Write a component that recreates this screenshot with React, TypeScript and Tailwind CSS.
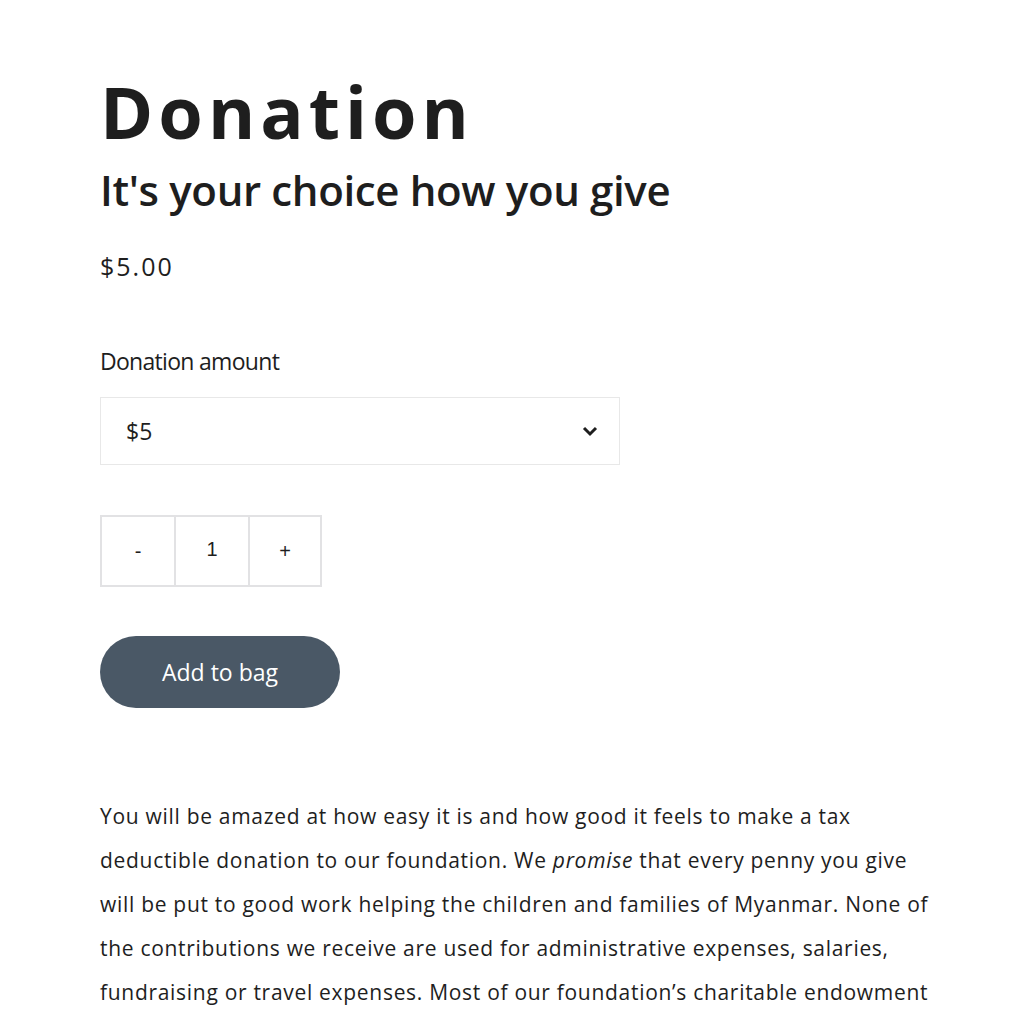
import React, { useState } from "react";

const lines: React.ReactNode[] = [
  "You will be amazed at how easy it is and how good it feels to make a tax",
  <>
    deductible donation to our foundation. We <em>promise</em> that every penny you give
  </>,
  "will be put to good work helping the children and families of Myanmar. None of",
  "the contributions we receive are used for administrative expenses, salaries,",
  "fundraising or travel expenses. Most of our foundation\u2019s charitable endowment",
];

export default function App() {
  const [qty, setQty] = useState(1);
  const [amount, setAmount] = useState("$5");

  return (
    <div className="min-h-screen bg-white text-[#1e1e1e] font-['Open_Sans',sans-serif]">
      <div className="pl-[100px] pt-[71px]">
        {/* Title */}
        <h1 className="font-bold text-[72px] leading-[80px] tracking-[5px]">Donation</h1>
        <h2 className="font-semibold text-[42px] leading-[48px] mt-[15px] tracking-[-0.35px]">
          It's your choice how you give
        </h2>

        <div className="text-[25px] leading-[32px] mt-[36px] tracking-[2px]">$5.00</div>

        {/* Amount select */}
        <label className="block text-[23px] leading-[32px] mt-[63px] tracking-[-0.7px]">
          Donation amount
        </label>
        <div className="relative mt-[20px] w-[520px]">
          <select
            value={amount}
            onChange={(e) => setAmount(e.target.value)}
            className="appearance-none w-full h-[68px] border border-[#e8e8e8] bg-white pl-[25px] text-[23px] outline-none"
          >
            <option>$5</option>
            <option>$10</option>
            <option>$25</option>
            <option>$50</option>
          </select>
          <svg
            width="16"
            height="12"
            viewBox="0 0 16 12"
            className="absolute right-[22px] top-[28px] pointer-events-none"
          >
            <polyline
              points="2,3 8,9 14,3"
              fill="none"
              stroke="#1e1e1e"
              strokeWidth="3"
            />
          </svg>
        </div>

        {/* Quantity */}
        <div className="mt-[50px] flex w-fit font-['Liberation_Sans',sans-serif] text-[20px]">
          <button
            onClick={() => setQty((q) => Math.max(1, q - 1))}
            className="w-[76px] h-[72px] border-2 border-[#e2e2e4] flex items-center justify-center"
          >
            -
          </button>
          <div className="w-[72px] h-[72px] border-y-2 border-[#e2e2e4] flex items-center justify-center pb-[4px]">
            {qty}
          </div>
          <button
            onClick={() => setQty((q) => q + 1)}
            className="w-[74px] h-[72px] border-2 border-[#e2e2e4] flex items-center justify-center"
          >
            +
          </button>
        </div>

        {/* Add to bag */}
        <button className="mt-[49px] w-[240px] h-[72px] rounded-full bg-[#4a5866] text-white text-[23px]">
          Add to bag
        </button>

        {/* Description */}
        <p className="mt-[86px] text-[21px] leading-[44px] tracking-[0.7px] whitespace-nowrap">
          {lines.map((l, i) => (
            <span key={i} className="block">
              {l}
            </span>
          ))}
        </p>
      </div>
    </div>
  );
}
